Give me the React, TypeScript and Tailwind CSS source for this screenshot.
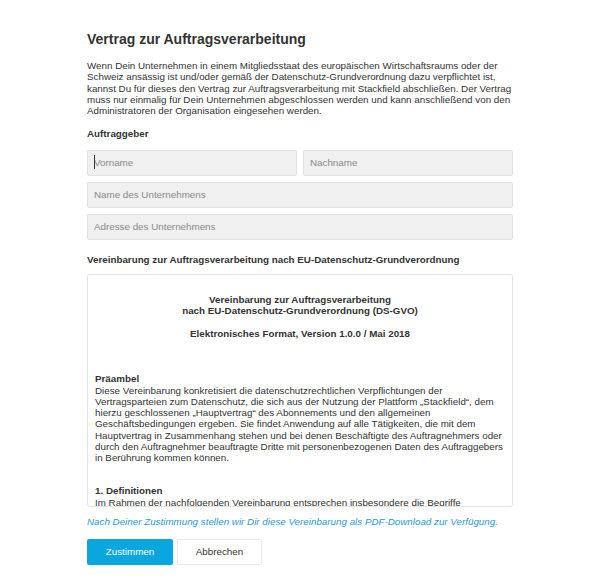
import React from "react";

export default function App() {
  const font = { fontFamily: '"Liberation Sans", Arial, sans-serif' };
  const inputCls =
    "h-[26px] w-full rounded-[2px] border border-[#e2e2e2] bg-[#f0f0f0] px-[6px] text-[9.8px] outline-none placeholder:text-[#8a8a8a]";
  return (
    <div className="min-h-[588px] w-full bg-white text-[#333]" style={font}>
      <div className="ml-[87px] w-[426px] pt-[29px] pb-[20px]">
        <h1 className="text-[14px] font-bold leading-[20px] text-[#333]">Vertrag zur Auftragsverarbeitung</h1>
        <p className="mt-[11px] text-[9.8px] leading-[11.3px] text-[#333]">
          Wenn Dein Unternehmen in einem Mitgliedsstaat des europäischen Wirtschaftsraums oder der Schweiz ansässig ist
          und/oder gemäß der Datenschutz-Grundverordnung dazu verpflichtet ist, kannst Du für dieses den Vertrag zur
          Auftragsverarbeitung mit Stackfield abschließen. Der Vertrag muss nur einmalig für Dein Unternehmen
          abgeschlossen werden und kann anschließend von den Administratoren der Organisation eingesehen werden.
        </p>
        <h2 className="mt-[11px] text-[9.8px] font-bold leading-[14px]">Auftraggeber</h2>
        <div className="mt-[8px] flex flex-col gap-[6px]">
          <div className="flex gap-[6px]">
            <div className="relative flex-1">
              <input className={inputCls} placeholder="Vorname" style={font} />
              <span className="absolute left-[7px] top-[6px] h-[14px] w-px bg-[#333]" />
            </div>
            <div className="flex-1">
              <input className={inputCls} placeholder="Nachname" style={font} />
            </div>
          </div>
          <input className={inputCls} placeholder="Name des Unternehmens" style={font} />
          <input className={inputCls} placeholder="Adresse des Unternehmens" style={font} />
        </div>
        <h2 className="mt-[13px] text-[9.8px] font-bold leading-[14px]">
          Vereinbarung zur Auftragsverarbeitung nach EU-Datenschutz-Grundverordnung
        </h2>
        <div className="mt-[7px] h-[233px] overflow-hidden rounded-[3px] border border-[#e4e4e4] bg-white px-[7px] pt-[19px] text-[9.8px] leading-[11.3px]">
          <div className="text-center font-bold">
            <div>Vereinbarung zur Auftragsverarbeitung</div>
            <div>nach EU-Datenschutz-Grundverordnung (DS-GVO)</div>
            <div className="mt-[11.7px]">Elektronisches Format, Version 1.0.0 / Mai 2018</div>
          </div>
          <div className="mt-[33.7px] font-bold">Präambel</div>
          <p>
            Diese Vereinbarung konkretisiert die datenschutzrechtlichen Verpflichtungen der Vertragsparteien zum
            Datenschutz, die sich aus der Nutzung der Plattform „Stackfield“, dem hierzu geschlossenen „Hauptvertrag“ des
            Abonnements und den allgemeinen Geschäftsbedingungen ergeben. Sie findet Anwendung auf alle Tätigkeiten, die
            mit dem Hauptvertrag in Zusammenhang stehen und bei denen Beschäftigte des Auftragnehmers oder durch den
            Auftragnehmer beauftragte Dritte mit personenbezogenen Daten des Auftraggebers in Berührung kommen können.
          </p>
          <div className="mt-[21.7px] font-bold">1. Definitionen</div>
          <p>
            Im Rahmen der nachfolgenden Vereinbarung entsprechen insbesondere die Begriffe „personenbezogene Daten“,
            „Verarbeitung“, „Verantwortlicher“ und „Auftragsverarbeiter“ den Definitionen des Art. 4 DS-GVO.
          </p>
        </div>
        <p className="mt-[8px] text-[9.8px] italic leading-[14px] text-[#1f9bd3]">
          Nach Deiner Zustimmung stellen wir Dir diese Vereinbarung als PDF-Download zur Verfügung.
        </p>
        <div className="mt-[10px] flex gap-[4px]">
          <button className="h-[26px] w-[86px] rounded-[2px] bg-[#0aa6e0] text-[9.8px] text-white" style={font}>
            Zustimmen
          </button>
          <button
            className="h-[26px] w-[85px] rounded-[2px] border border-[#ebebeb] bg-white text-[9.8px] text-[#333]"
            style={font}
          >
            Abbrechen
          </button>
        </div>
      </div>
    </div>
  );
}
